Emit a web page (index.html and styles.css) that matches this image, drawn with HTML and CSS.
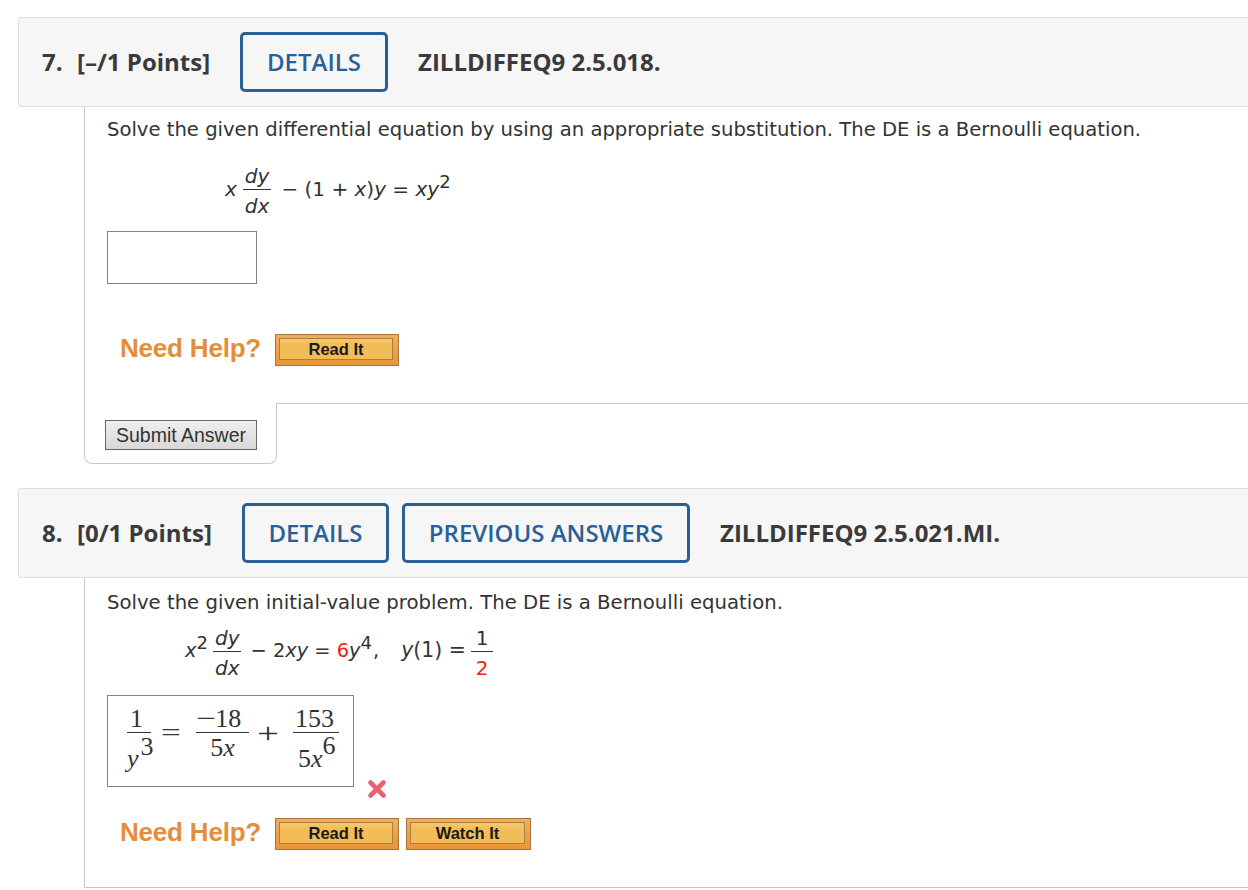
FILE: index.html
```html
<!DOCTYPE html>
<html lang="en">
  <head>
    <meta charset="utf-8">
    <title>Homework</title>
    <link rel="stylesheet" href="styles.css">
  </head>
  <body>
    <div class="question q7">
      <div class="qhead">
        <span class="qnum">7.</span>
        <span class="points">[&#8211;/1 Points]</span>
        <a class="tab tab-details">DETAILS</a>
        <span class="ref">ZILLDIFFEQ9 2.5.018.</span>
      </div>
      <div class="qbody">
        <p class="prompt">Solve the given differential equation by using an appropriate substitution. The DE is a Bernoulli equation.</p>
        <div class="eq eq1">
          <i>x</i>
          <span class="frac"><span class="num"><i>dy</i></span><span class="den"><i>dx</i></span></span>
          <span>&#8722; (1 + <i>x</i>)<i>y</i> = <i>xy</i><sup>2</sup></span>
        </div>
        <div class="answer-empty"></div>
        <div class="help">
          <span class="need">Need Help?</span>
          <a class="gold"><span>Read It</span></a>
        </div>
      </div>
      <div class="submit-row">
        <div class="submit-box"><button class="submit">Submit Answer</button></div>
        <div class="submit-rest"></div>
      </div>
    </div>

    <div class="question q8">
      <div class="qhead">
        <span class="qnum">8.</span>
        <span class="points">[0/1 Points]</span>
        <a class="tab tab-details">DETAILS</a>
        <a class="tab tab-prev">PREVIOUS ANSWERS</a>
        <span class="ref">ZILLDIFFEQ9 2.5.021.MI.</span>
      </div>
      <div class="qbody qbody-last">
        <p class="prompt">Solve the given initial-value problem. The DE is a Bernoulli equation.</p>
        <div class="eq eq2">
          <span><i>x</i><sup>2</sup></span>
          <span class="frac"><span class="num"><i>dy</i></span><span class="den"><i>dx</i></span></span>
          <span class="eq-mid">&#8722; 2<i>xy</i> = <b class="red">6</b><i>y</i><sup>4</sup><span class="comma">,</span></span>
          <span class="eq-mid eq-ic"><i>y</i>(1) =</span>
          <span class="frac frac-half"><span class="num">1</span><span class="den red">2</span></span>
        </div>
        <div class="answer-row">
          <div class="answer-math">
            <span class="mfrac mfrac-a"><span class="mnum">1</span><span class="mden"><i>y</i><sup>3</sup></span></span>
            <span class="mop mop-eq">=</span>
            <span class="mfrac mfrac-b"><span class="mnum"><span class="mminus">&#8722;</span>18</span><span class="mden">5<i>x</i></span></span>
            <span class="mop mop-plus">+</span>
            <span class="mfrac mfrac-c"><span class="mnum">153</span><span class="mden">5<i>x</i><sup>6</sup></span></span>
          </div>
          <svg class="cross" width="20" height="20" viewBox="0 0 20 20">
            <path d="M3.5 3.5 L16.5 16.5 M16.5 3.5 L3.5 16.5" stroke="#e5636c" stroke-width="4.6" stroke-linecap="round"/>
          </svg>
        </div>
        <div class="help help-last">
          <span class="need">Need Help?</span>
          <a class="gold"><span>Read It</span></a>
          <a class="gold"><span>Watch It</span></a>
        </div>
      </div>
    </div>
  </body>
</html>
```

FILE: styles.css
```css
html, body { margin: 0; padding: 0; height: 890px; overflow: hidden; background: #fff; }
body { padding: 17px 0 0 18px; box-sizing: border-box; color: #333; font-family: "DejaVu Sans", sans-serif; }

.question { margin-right: -12px; }
.q8 { margin-top: 24px; }

.qhead {
  display: flex; align-items: center; height: 90px; box-sizing: border-box;
  padding-left: 23px; background: #f6f6f6; border: 1px solid #dedede; border-radius: 3px;
  font-family: "Open Sans", sans-serif; font-weight: 700; font-size: 24px; color: #3a3a3a;
}
.qnum { width: 35px; margin-top: -2px; }
.points { width: 163px; margin-top: -2px; }
.q8 .points { width: 165px; }
.tab {
  display: flex; align-items: center; justify-content: center; box-sizing: border-box;
  height: 60px; padding-bottom: 2px; border: 3px solid #2a6096; border-radius: 5px; color: #2a6096;
  font-weight: 600; font-size: 24px;
}
.tab-details { width: 148px; }
.q8 .tab-details { width: 147px; }
.tab-prev { width: 288px; margin-left: 13px; }
.ref { margin-left: 30px; margin-top: -2px; }

.qbody { margin-left: 66px; border-left: 1px solid #c8c8c8; padding-left: 22px; height: 296px; }
.qbody-last { height: 309px; border-bottom: 1px solid #c8c8c8; }
.prompt { margin: 0; padding-top: 11px; font-size: 19.6px; line-height: 24px; color: #333; white-space: nowrap; }
.qbody-last .prompt { padding-top: 13px; font-size: 19.66px; }

.eq { display: flex; align-items: center; font-size: 20px; color: #333; }
.eq1 { padding: 22px 0 0 118px; gap: 6px; height: 50px; }
.eq2 { padding: 10px 0 0 78px; gap: 5px; height: 50px; font-size: 19.4px; }
.eq sup { font-size: 18px; line-height: 0; vertical-align: 8px; }
.frac { display: inline-flex; flex-direction: column; align-items: center; font-size: 20px; line-height: 25px; margin: 6px 4px 0 0; }
.eq1 .frac { margin-top: 4px; }
.frac .num { border-bottom: 1px solid #333; padding: 0 2px; }
.frac .den { margin-top: 4px; }
.red { color: #e8231a; font-weight: normal; }
.comma { margin-left: 1px; }
.eq-ic { margin-left: 17px; font-size: 20.4px; }
.frac-half { margin-right: 0; }
.frac-half .num { padding: 0 5px; }

.answer-empty { width: 148px; height: 51px; margin-top: 17px; border: 1px solid #808080; }

.help { display: flex; align-items: center; gap: 7px; margin: 49px 0 0 13px; }
.help-last { margin-top: 30px; }
.need { width: 148px; padding-bottom: 2px; font: bold 26px "Liberation Sans", sans-serif; color: #e48d3b; letter-spacing: -0.2px; }
.gold {
  display: block; box-sizing: border-box; width: 124px; height: 32px; padding: 3px 5px 5px 3px;
  background: linear-gradient(#f0ae5e, #e8953a); border: 1px solid #a9743a;
}
.help-last .gold + .gold { width: 125px; }
.gold span {
  display: block; height: 22px; text-align: center; background: linear-gradient(#f6c871, #f2bd58 30%);
  border: 1px solid #a9803f; box-sizing: border-box;
  font: bold 16.5px/21px "Liberation Sans", sans-serif; color: #1a1a1a;
}

.submit-row { display: flex; margin-left: 66px; height: 61px; }
.submit-box {
  width: 193px; box-sizing: border-box; border: 1px solid #c8c8c8; border-top: 0;
  border-radius: 0 0 8px 8px; padding: 17px 0 0 20px;
}
.submit {
  display: block; width: 152px; height: 30px; padding: 0; background: linear-gradient(#efefef, #d8d8d8);
  border: 1px solid #666; border-radius: 0; font: 19.5px "Liberation Sans", sans-serif; color: #333;
}
.submit-rest { flex: 1; border-top: 1px solid #c8c8c8; }

.answer-row { display: flex; align-items: flex-end; margin-top: 20px; }
.answer-math {
  display: flex; align-items: flex-start; box-sizing: border-box; width: 247px; height: 92px;
  padding: 9px 0 0 19px; border: 1px solid #808080; font-family: "Liberation Serif", serif; font-size: 26px; color: #333;
}
.mfrac { display: flex; flex-direction: column; line-height: 27px; }
.mnum { text-align: center; border-bottom: 1px solid #333; height: 28px; }
.mden { white-space: nowrap; }
.mden sup { font-size: 26px; line-height: 0; vertical-align: 13px; }
.mfrac-a { width: 24px; }
.mfrac-a .mnum { padding-right: 5px; box-sizing: border-box; }
.mfrac-a .mden { margin-top: 12px; }
.mfrac-a sup { margin-left: 2px; vertical-align: 12px; }
.mfrac-b { width: 53px; margin-left: 10px; }
.mfrac-b .mnum { padding-right: 5px; box-sizing: border-box; }
.mfrac-b .mden { margin-top: 1px; text-align: center; }
.mfrac-c { width: 46px; margin-left: 10px; }
.mfrac-c .mnum { padding-right: 3px; box-sizing: border-box; }
.mfrac-c .mden { margin-top: 12px; padding-left: 5px; }
.mminus { display: inline-block; transform: scaleX(1.35); margin-right: 2px; }
.mop { margin-top: 13px; line-height: 30px; width: 30px; text-align: center; }
.mop-eq { margin-left: 5px; transform: scaleX(1.35); }
.mop-plus { margin-left: 4px; transform: scaleX(1.3); font-size: 30px; }
.cross { margin: 0 0 -12px 13px; }
```
